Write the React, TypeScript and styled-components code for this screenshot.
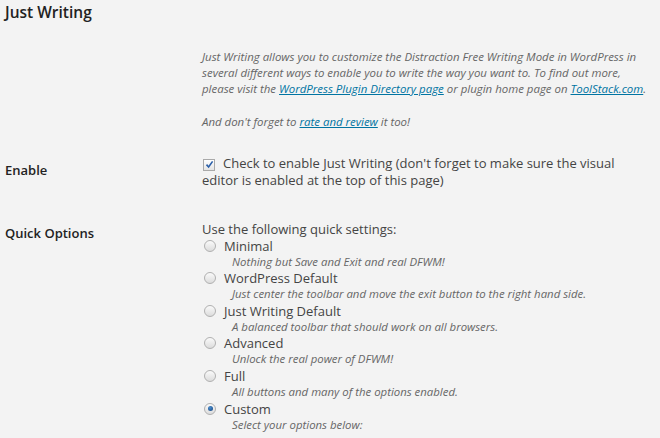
import React from "react";
import styled, { createGlobalStyle } from "styled-components";

const GlobalStyle = createGlobalStyle`
  html, body {
    margin: 0;
    padding: 0;
    background: #f3f3f3;
  }
  body {
    font-family: "Open Sans", "Liberation Sans", sans-serif;
    font-size: 13px;
    color: #444;
  }
`;

const options = [
  { label: "Minimal", hint: "Nothing but Save and Exit and real DFWM!" },
  {
    label: "WordPress Default",
    hint: "Just center the toolbar and move the exit button to the right hand side.",
  },
  {
    label: "Just Writing Default",
    hint: "A balanced toolbar that should work on all browsers.",
  },
  { label: "Advanced", hint: "Unlock the real power of DFWM!" },
  { label: "Full", hint: "All buttons and many of the options enabled." },
  { label: "Custom", hint: "Select your options below:" },
];

const App = () => {
  const selected = "Custom";
  return (
    <Page>
      <GlobalStyle />
      <Title>Just Writing</Title>
      <FormRow $top={28}>
        <Label />
        <Field>
          <Description>
            Just Writing allows you to customize the Distraction Free Writing
            Mode in WordPress in
            <br />
            several different ways to enable you to write the way you want to.
            To find out more,
            <br />
            please visit the{" "}
            <Link href="#">WordPress Plugin Directory page</Link> or plugin home
            page on <Link href="#">ToolStack.com</Link>.
          </Description>
          <Description>
            And don't forget to <Link href="#">rate and review</Link> it too!
          </Description>
        </Field>
      </FormRow>
      <FormRow $top={25}>
        <Label $offset={7}>Enable</Label>
        <Field>
          <CheckText>
            <CheckBox>
              <svg width="9" height="9" viewBox="0 0 9 9">
                <path
                  d="M1.5 4.6 L3.6 7 L7.6 1.4"
                  fill="none"
                  stroke="#2b5fa8"
                  strokeWidth="1.6"
                />
              </svg>
            </CheckBox>
            Check to enable Just Writing (don't forget to make sure the visual
            editor is enabled at the top of this page)
          </CheckText>
        </Field>
      </FormRow>
      <FormRow $top={32}>
        <Label $offset={4}>Quick Options</Label>
        <Field>
          <Intro>Use the following quick settings:</Intro>
          <RadioList>
            {options.map((o) => (
              <RadioOption key={o.label}>
                <OptionLine>
                  <RadioDot $checked={o.label === selected} />
                  <OptionLabel>{o.label}</OptionLabel>
                </OptionLine>
                <OptionHint>{o.hint}</OptionHint>
              </RadioOption>
            ))}
          </RadioList>
        </Field>
      </FormRow>
    </Page>
  );
};

const Page = styled.div`
  padding: 3px 5px 0 5px;
  width: 650px;
`;

const Title = styled.h2`
  margin: 0;
  font-size: 15.5px;
  line-height: 18px;
  font-weight: 600;
  color: #222;
`;

const FormRow = styled.div<{ $top: number }>`
  display: grid;
  grid-template-columns: 197px 446px;
  margin-top: ${(p) => p.$top}px;
`;

const Label = styled.div<{ $offset?: number }>`
  padding-top: ${(p) => p.$offset || 0}px;
  font-size: 13px;
  font-weight: 600;
  line-height: 16px;
  color: #222;
`;

const Field = styled.div`
  display: flex;
  flex-direction: column;
`;

const Description = styled.p`
  margin: 0 0 17px 0;
  font-size: 11.45px;
  line-height: 16px;
  font-style: italic;
  white-space: nowrap;
  color: #666;
  &:last-child {
    margin-bottom: 0;
  }
`;

const Link = styled.a`
  color: #0074a2;
  text-decoration: underline;
`;

const CheckText = styled.div`
  font-size: 13px;
  line-height: 17px;
  color: #444;
`;

const CheckBox = styled.span`
  display: inline-flex;
  align-items: center;
  justify-content: center;
  box-sizing: border-box;
  width: 12px;
  height: 12px;
  margin: 0 8px 0 1px;
  vertical-align: -1px;
  border: 1px solid #a9a9a9;
  background: linear-gradient(#ffffff, #e4e4e4);
`;

const Intro = styled.div`
  font-size: 13px;
  line-height: 16.4px;
`;

const RadioList = styled.div`
  display: flex;
  flex-direction: column;
`;

const RadioOption = styled.div`
  display: flex;
  flex-direction: column;
`;

const OptionLine = styled.div`
  display: flex;
  align-items: center;
  height: 16.3px;
`;

const RadioDot = styled.span<{ $checked: boolean }>`
  position: relative;
  box-sizing: border-box;
  width: 12px;
  height: 12px;
  margin: 0 8px 0 2px;
  border-radius: 50%;
  border: 1px solid #b0b0b0;
  background: linear-gradient(#fafafa, #dcdcdc);
  &::after {
    content: "";
    display: ${(p) => (p.$checked ? "block" : "none")};
    position: absolute;
    left: 2.5px;
    top: 2.5px;
    width: 5px;
    height: 5px;
    border-radius: 50%;
    background: radial-gradient(circle at 40% 35%, #4a8fd0, #14407a);
  }
`;

const OptionLabel = styled.span`
  font-size: 13px;
  color: #444;
`;

const OptionHint = styled.div`
  padding-left: 30px;
  font-size: 11.4px;
  line-height: 16.3px;
  font-style: italic;
  color: #666;
`;

export default App;
